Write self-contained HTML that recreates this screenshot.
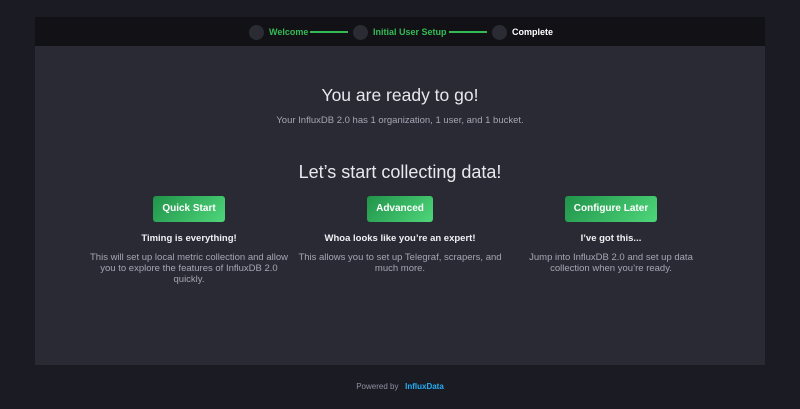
<!DOCTYPE html>
<html><head><style>
*{margin:0;padding:0;box-sizing:border-box}
body{width:800px;height:409px;background:#1b1c23;font-family:"Liberation Sans",sans-serif;position:relative;overflow:hidden}
.hdr{position:absolute;left:35px;top:17px;width:730px;height:29px;background:#111116}
.st{position:absolute;top:7px;height:16px;display:flex;align-items:center;font-size:9px;font-weight:bold}
.dot{width:15px;height:15px;border-radius:50%;background:#2a2b33;margin-right:5px}
.ln{position:absolute;top:14px;height:1.5px;background:#34bb55}
.panel{position:absolute;left:35px;top:46px;width:730px;height:319px;background:#292a33}
.c{position:absolute;left:0;width:800px;text-align:center}
.btn{position:absolute;top:196px;height:26px;border-radius:3px;background:linear-gradient(135deg,#20934a,#4ed67a);color:#fff;font-size:10px;font-weight:bold;text-align:center;line-height:26px}
.col{position:absolute;width:204px;text-align:center}
.h{top:233px;color:#f0f0f5;font-size:9.5px;font-weight:bold}
.d{top:252px;color:#a4a6b4;font-size:9.5px;line-height:11px}
</style></head><body>
<div class="hdr">
<div class="st" style="left:214px;color:#34bb55"><div class="dot"></div>Welcome</div>
<div class="ln" style="left:275px;width:38px"></div>
<div class="st" style="left:318px;color:#34bb55"><div class="dot"></div>Initial User Setup</div>
<div class="ln" style="left:414px;width:38px"></div>
<div class="st" style="left:457px;color:#fff"><div class="dot"></div>Complete</div>
</div>
<div class="panel"></div>
<div class="c" style="top:85px;font-size:17.5px;color:#e8e8ee">You are ready to go!</div>
<div class="c" style="top:115px;font-size:9.5px;color:#a4a6b4">Your InfluxDB 2.0 has 1 organization, 1 user, and 1 bucket.</div>
<div class="c" style="top:162px;font-size:18px;color:#e8e8ee">Let’s start collecting data!</div>
<div class="btn" style="left:153px;width:72px">Quick Start</div>
<div class="btn" style="left:367px;width:66px">Advanced</div>
<div class="btn" style="left:565px;width:92px">Configure Later</div>
<div class="col h" style="left:87px">Timing is everything!</div>
<div class="col h" style="left:298px">Whoa looks like you’re an expert!</div>
<div class="col h" style="left:509px">I’ve got this...</div>
<div class="col d" style="left:87px">This will set up local metric collection and allow you to explore the features of InfluxDB 2.0 quickly.</div>
<div class="col d" style="left:298px">This allows you to set up Telegraf, scrapers, and much more.</div>
<div class="col d" style="left:524px;width:174px">Jump into InfluxDB 2.0 and set up data collection when you’re ready.</div>
<div class="c" style="top:382px;font-size:8px;color:#8e90a0">Powered by &nbsp;&nbsp;<b style="color:#22adf6">InfluxData</b></div>
</body></html>
